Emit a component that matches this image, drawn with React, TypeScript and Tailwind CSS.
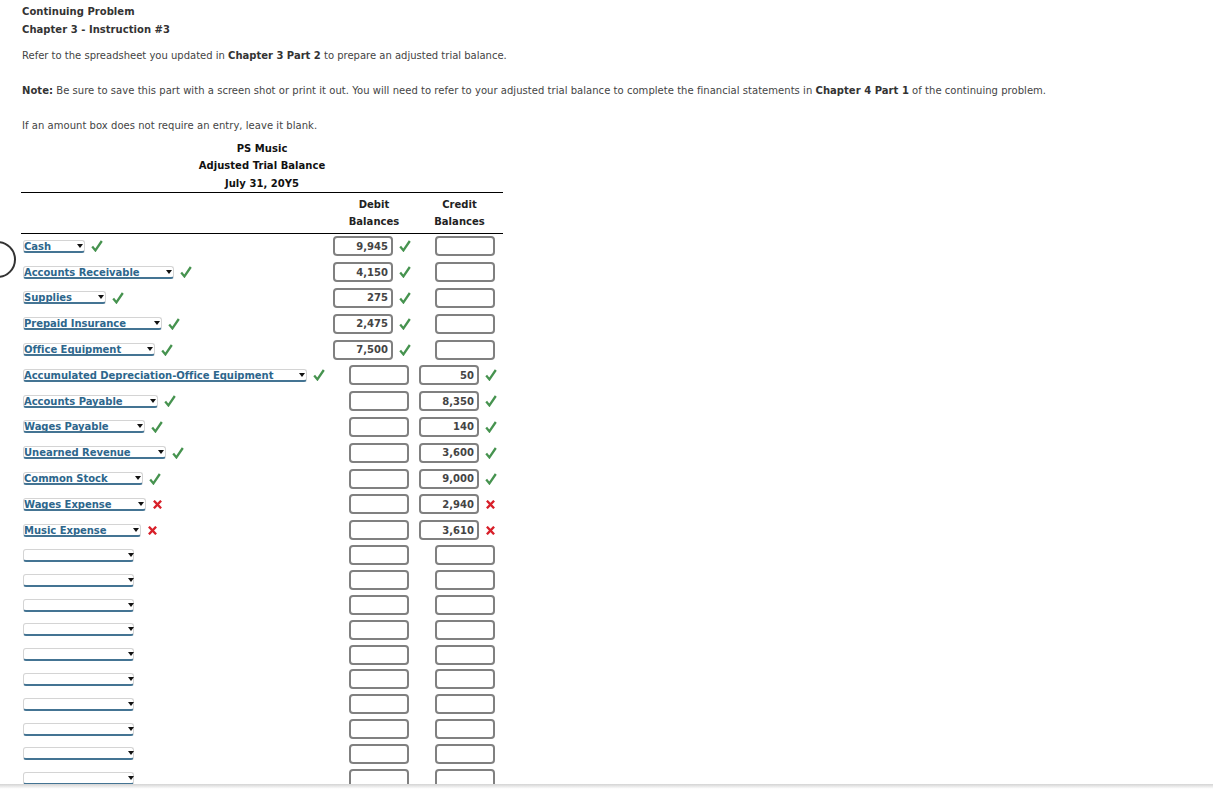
type Row = {
  account: string;
  selectWidth: string;
  debit?: string;
  credit?: string;
  wrong?: boolean;
};

const rows: Row[] = [
  { account: 'Cash', selectWidth: 'w-[62px]', debit: '9,945' },
  { account: 'Accounts Receivable', selectWidth: 'w-[151px]', debit: '4,150' },
  { account: 'Supplies', selectWidth: 'w-[83px]', debit: '275' },
  { account: 'Prepaid Insurance', selectWidth: 'w-[139px]', debit: '2,475' },
  { account: 'Office Equipment', selectWidth: 'w-[132px]', debit: '7,500' },
  { account: 'Accumulated Depreciation-Office Equipment', selectWidth: 'w-[284px]', credit: '50' },
  { account: 'Accounts Payable', selectWidth: 'w-[135px]', credit: '8,350' },
  { account: 'Wages Payable', selectWidth: 'w-[122px]', credit: '140' },
  { account: 'Unearned Revenue', selectWidth: 'w-[143px]', credit: '3,600' },
  { account: 'Common Stock', selectWidth: 'w-[120px]', credit: '9,000' },
  { account: 'Wages Expense', selectWidth: 'w-[123px]', credit: '2,940', wrong: true },
  { account: 'Music Expense', selectWidth: 'w-[118px]', credit: '3,610', wrong: true },
];

const Mark = ({ wrong }: { wrong?: boolean }) =>
  wrong ? (
    <svg viewBox="0 0 10 10" className="ml-[7px] h-[9px] w-[9px] shrink-0 text-[#d8202a]">
      <path d="M1 0.8 9 9.2M9 0.8 1 9.2" fill="none" stroke="currentColor" strokeWidth="2.6" />
    </svg>
  ) : (
    <svg viewBox="0 0 12 12" className="ml-[6px] h-[12px] w-[12px] shrink-0 text-[#46934f]">
      <path d="M1.2 6.6 4.4 10.4 10.8 1" fill="none" stroke="currentColor" strokeWidth="2.3" />
    </svg>
  );

const AccountSelect = ({ account, width }: { account?: string; width: string }) => (
  <div className={`relative h-[13px] ${width} shrink-0`}>
    <select
      value={account ?? ''}
      disabled
      className="block h-[13px] w-full appearance-none rounded-[3px] border border-b-2 border-[#d4d4d4] border-b-[#447493] bg-white px-0 text-[10px] leading-[11px] font-bold tracking-[-0.03px] text-[#2d668c] opacity-100"
    >
      <option value={account ?? ''}>{account ?? ''}</option>
    </select>
    <span
      className={
        account
          ? 'absolute top-[4px] right-[2px] h-0 w-0 border-x-[3px] border-t-[4px] border-x-transparent border-t-[#111]'
          : 'absolute top-[4px] right-[0px] h-0 w-0 border-x-[3px] border-t-[4px] border-x-transparent border-t-[#111]'
      }
    />
  </div>
);

const Amount = ({ value, wrong }: { value?: string; wrong?: boolean }) => (
  <div className={value ? 'flex items-center' : 'flex items-center pl-4'}>
    <input
      readOnly
      value={value ?? ''}
      className="h-[20px] w-[60px] rounded-[4px] border-2 border-[#808080] bg-white px-[3px] text-right text-[10px] font-bold text-[#444] outline-none"
    />
    {value && <Mark wrong={wrong} />}
  </div>
);

export default function App() {
  return (
    <div className="relative h-[792px] w-[1213px] overflow-hidden bg-white font-['DejaVu_Sans',sans-serif] text-[10px] tracking-[0.04px] text-[#444]">
      <div className="pt-[3px] pl-[22px]">
        <p className="h-[18px] leading-[18px] font-bold text-[#333]">Continuing Problem</p>
        <p className="h-[18px] leading-[18px] font-bold text-[#333]">Chapter 3 - Instruction #3</p>
        <p className="mt-[8px] h-[18px] leading-[18px] tracking-[0px]">
          Refer to the spreadsheet you updated in <b className="text-[#333]">Chapter 3 Part 2</b> to prepare an adjusted trial balance.
        </p>
        <p className="mt-[17px] h-[18px] leading-[18px]">
          <b className="text-[#333]">Note:</b> Be sure to save this part with a screen shot or print it out. You will need to refer to your adjusted trial balance to complete the financial statements in{' '}
          <b className="text-[#333]">Chapter 4 Part 1</b> of the continuing problem.
        </p>
        <p className="mt-[17px] h-[18px] leading-[18px]">If an amount box does not require an entry, leave it blank.</p>
      </div>

      <div className="mt-[5px] ml-[21px] w-[482px]">
        <div className="h-[52.5px] border-b border-black text-center font-bold text-[#111]">
          <p className="h-[17px] leading-[17px]">PS Music</p>
          <p className="h-[18px] leading-[17px]">Adjusted Trial Balance</p>
          <p className="h-[17px] leading-[17px]">July 31, 20Y5</p>
        </div>
        <div className="flex h-[41px] items-center border-b border-black pt-[1px] font-bold text-[#222]">
          <div className="w-[312px]" />
          <div className="w-[82px] text-center leading-[17px]">
            Debit
            <br />
            Balances
          </div>
          <div className="w-[86px] pl-[3px] text-center leading-[17px]">
            Credit
            <br />
            Balances
          </div>
        </div>

        {rows.map((row) => (
          <div key={row.account} className="flex h-[25.8px] items-center">
            <div className="flex w-[312px] items-center pl-[2px]">
              <AccountSelect account={row.account} width={row.selectWidth} />
              <Mark wrong={row.wrong} />
            </div>
            <div className="w-[86px]">
              <Amount value={row.debit} />
            </div>
            <div className="w-[84px]">
              <Amount value={row.credit} wrong={row.wrong} />
            </div>
          </div>
        ))}

        {Array.from({ length: 10 }, (_, i) => (
          <div key={i} className="flex h-[24.8px] items-center">
            <div className="flex w-[312px] items-center pl-[2px]">
              <AccountSelect width="w-[111px]" />
            </div>
            <div className="w-[86px]">
              <Amount />
            </div>
            <div className="w-[84px]">
              <Amount />
            </div>
          </div>
        ))}
      </div>

      {/* cursor ring sitting over the page */}
      <div className="absolute top-[241px] left-[-21px] h-[37px] w-[37px] rounded-full border-2 border-[#333]" />

      <div className="absolute inset-x-0 bottom-0 h-[8px] bg-gradient-to-b from-[#d4d4d4] to-white to-60%" />
    </div>
  );
}
